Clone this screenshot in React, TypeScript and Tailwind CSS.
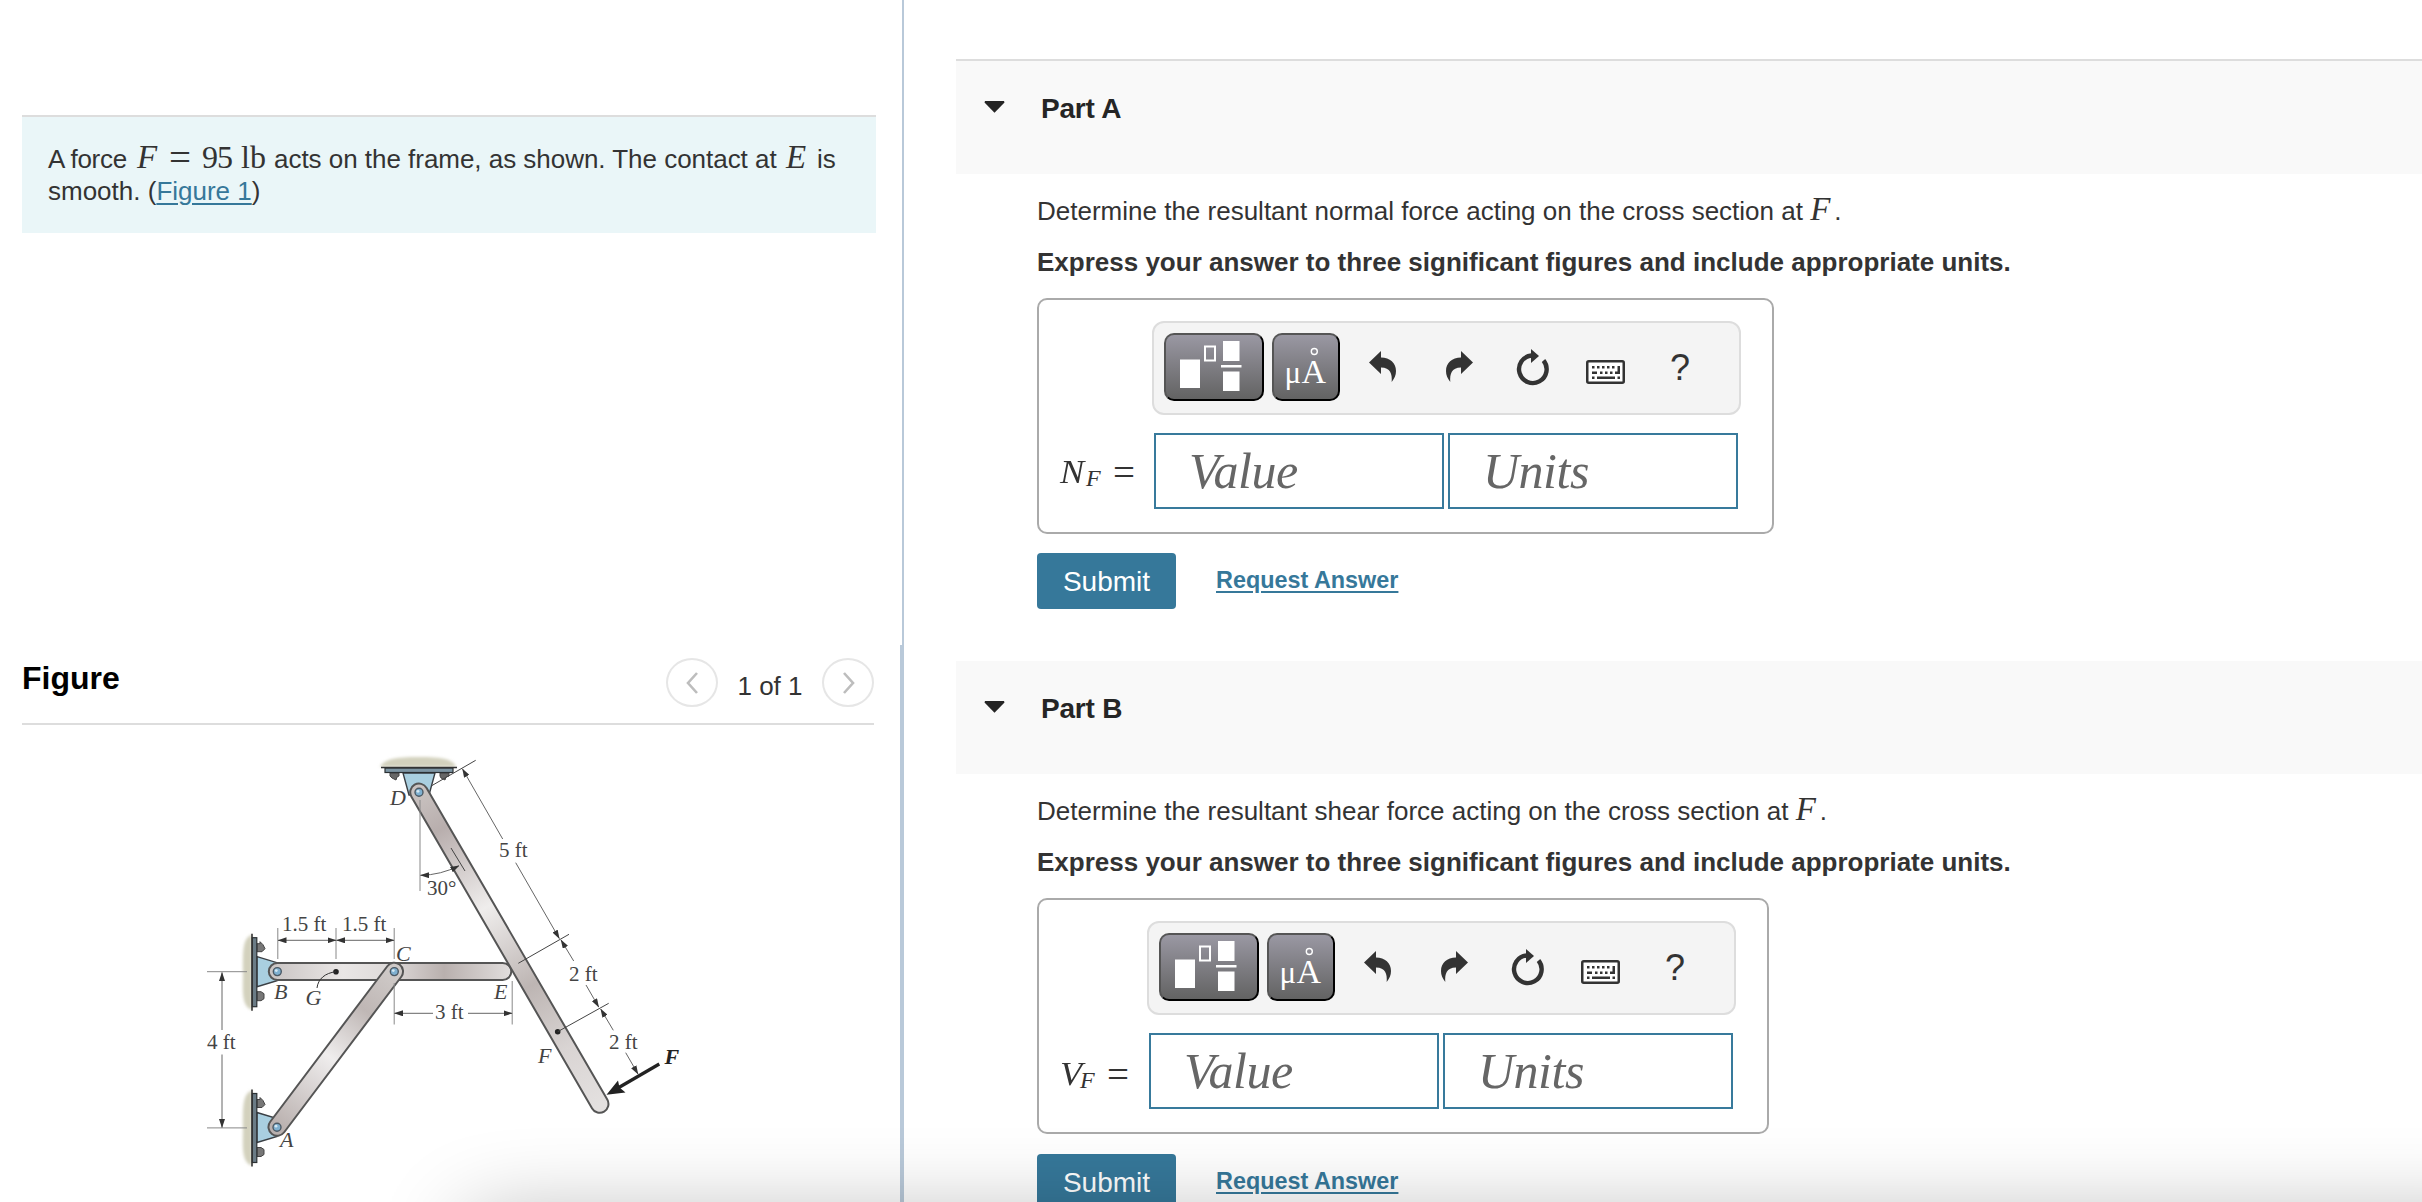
import type { ReactNode } from "react";

function Var({ children, className = "" }: { children: ReactNode; className?: string }) {
  return (
    <span className={`inline-block font-['Liberation_Serif',serif] leading-[0] whitespace-nowrap ${className}`}>
      {children}
    </span>
  );
}

function UndoIcon({ className = "" }: { className?: string }) {
  return (
    <svg className={className} width="27" height="31" viewBox="0 0 27 31" fill="#333">
      <path d="M0 11.500 12 0v6.500C21 6.500 27 12 27 20c0 4-1.500 7.500-4.300 11 .6-8-1.200-14.500-10.700-14.500V23z" />
    </svg>
  );
}

function ResetIcon() {
  return (
    <svg width="34" height="38" viewBox="0 0 34 38">
      <path d="M16.500 7.500A13.800 13.800 0 1 0 28.500 12.500" fill="none" stroke="#333" strokeWidth="4.400" />
      <path d="M16 1 24 8 16 15z" fill="#333" />
    </svg>
  );
}

function KeyboardIcon() {
  return (
    <svg width="39" height="24" viewBox="0 0 39 24" fill="#333">
      <rect x="1.250" y="1.250" width="36.500" height="21.500" rx="1.500" fill="#fff" stroke="#333" strokeWidth="2.500" />
      <path d="M6 6h2.500v2.500H6zM11 6h2.500v2.500H11zM16 6h2.500v2.500H16zM21 6h2.500v2.500H21zM26 6h2.500v2.500H26zM31.500 6H34v8h-5v-2.500h2.500z" />
      <path d="M6 11.500h5V14H6zM14 11.500h2.500V14H14zM19 11.500h2.500V14H19zM24 11.500h2.500V14H24zM6 16.500h2.500V19H6zM11 16.500h18V19H11zM31.500 16.500H34V19h-2.500z" />
    </svg>
  );
}

const toolButton =
  "h-[68px] rounded-[10px] border-2 border-t-[#555] border-l-[#555] border-r-black border-b-black bg-linear-to-b from-[#9a98a3] to-[#636363]";

function Toolbar() {
  return (
    <div className="flex h-[94px] w-[589px] items-start rounded-xl border-2 border-[#ddd] bg-[#f4f4f4] pt-[10px] pl-[10px]">
      <button className={`${toolButton} w-[100px]`}>
        <svg width="96" height="64" viewBox="2 2 96 64" fill="#fff">
          <path d="M16 26.500h20V55H16zM59 8h16.500v20H59zM57 32h20.500v2.500H57zM59 38.500h16.500v19.500H59z" />
          <rect x="41" y="13.500" width="10" height="14" fill="none" stroke="#fff" strokeWidth="2" />
        </svg>
      </button>
      <button className={`${toolButton} ml-2 w-[68px]`}>
        <svg width="64" height="64" viewBox="2 2 64 64" fill="#fff">
          <text x="12.500" y="49.500" fontSize="31" fontFamily="Liberation Serif">μ</text>
          <text x="29.500" y="49.500" fontSize="34" fontFamily="Liberation Serif">A</text>
          <circle cx="42.300" cy="18.500" r="3" fill="none" stroke="#fff" strokeWidth="1.400" />
        </svg>
      </button>
      <UndoIcon className="mt-[18px] ml-[29px]" />
      <UndoIcon className="mt-[18px] ml-[50px] -scale-x-100" />
      <span className="mt-[15px] ml-[42px]">
        <ResetIcon />
      </span>
      <span className="mt-[27px] ml-[37px]">
        <KeyboardIcon />
      </span>
      <span className="mt-[15px] ml-[45px] text-[36px] leading-10 text-[#333]">?</span>
    </div>
  );
}

function AnswerInput({ label }: { label: string }) {
  return (
    <div className="h-[76px] w-[290px] border-2 border-[#387a9c] bg-white pl-[33px] font-['Liberation_Serif',serif] text-[50px] leading-[73px] tracking-[-0.500px] text-[#666] italic">
      {label}
    </div>
  );
}

interface PartProps {
  title: string;
  force: string;
  symbol: string;
  symbolClass: string;
  labelClass: string;
  actionsClass: string;
}

function Part({ title, force, symbol, symbolClass, labelClass, actionsClass }: PartProps) {
  return (
    <section className="h-[600px]">
      <header className="flex h-[113px] bg-[#f9f9f9] pt-[31px] pl-7">
        <svg className="mt-[9px]" width="21" height="12" viewBox="0 0 21 12" fill="#252525">
          <path d="M1 0h19l.5 1.500L10.500 11.800.5 1.500z" />
        </svg>
        <h2 className="mt-px ml-9 text-[28px] leading-8 font-bold tracking-[-0.200px] text-[#252525]">{title}</h2>
      </header>
      <div className="pt-[21px] pl-[81px]">
        <p className="h-8 leading-8 whitespace-nowrap">
          Determine the resultant {force} force acting on the cross section at <Var className="w-[24px] text-[33px] italic">F</Var>.
        </p>
        <p className="mt-[19px] h-8 leading-8 font-bold whitespace-nowrap">
          Express your answer to three significant figures and include appropriate units.
        </p>
        <div className="mt-5 flex h-[236px] w-max rounded-[10px] border-2 border-[#aaa] pt-[21px] pr-[31px]">
          <div className={`pl-[21px] font-['Liberation_Serif',serif] whitespace-nowrap ${labelClass}`}>
            <div className="flex items-baseline leading-8">
              <span className={`text-[33px] italic ${symbolClass}`}>
                <span className="inline-block origin-left scale-x-110">{symbol}</span>
              </span>
              <span className="relative top-[3px] w-[27px] text-[24px] italic">F</span>
              <span className="relative top-[3px] text-[39px]">=</span>
            </div>
          </div>
          <div>
            <Toolbar />
            <div className="mt-[18px] ml-[2px] flex gap-1">
              <AnswerInput label="Value" />
              <AnswerInput label="Units" />
            </div>
          </div>
        </div>
        <div className={`flex ${actionsClass}`}>
          <button className="h-14 w-[139px] rounded bg-[#36789a] pt-px text-[28px] text-white">Submit</button>
          <a className="mt-[11px] ml-10 text-[23.400px] leading-8 font-bold text-[#36789a] underline decoration-2 underline-offset-[3px]">
            Request Answer
          </a>
        </div>
      </div>
    </section>
  );
}

function Pin({ x, y }: { x: number; y: number }) {
  return (
    <g>
      <circle cx={x} cy={y} r="4" fill="#7fb0d0" stroke="#4c5a65" strokeWidth="1.400" />
      <circle cx={x - 1} cy={y - 1} r="1.400" fill="#d5e8f2" />
    </g>
  );
}

// wall support, drawn around the pin on its right side
function WallSupport({ y }: { y: number }) {
  return (
    <g transform={`translate(0 ${y})`}>
      <path d="M252-37C242-34 243-18 243 0s-2 35 9 38z" fill="#d3d1bd" filter="url(#soft)" />
      <path d="M257-28h3v-2l3 3 2 4-3 3h-5zM257 20h4l3 2v5l-3 2h-4z" fill="#777" stroke="#444" strokeWidth="1" />
      <path d="M257-15 277-9v18l-20 6z" fill="#a9cfe0" stroke="#3a3f44" strokeWidth="1.400" />
      <rect x="252.300" y="-34" width="4.500" height="69" fill="#6b7c86" stroke="#2b3033" strokeWidth="1.200" />
      <path d="M252-38v77" stroke="#333" strokeWidth="1.600" />
    </g>
  );
}

function Arrows({ x1, y1, x2, y2, both = false }: { x1: number; y1: number; x2: number; y2: number; both?: boolean }) {
  return <line x1={x1} y1={y1} x2={x2} y2={y2} markerEnd="url(#arrow)" markerStart={both ? "url(#arrow)" : undefined} />;
}

function FrameFigure() {
  return (
    <svg className="ml-[168px]" width="510" height="462" viewBox="190 740 510 462">
      <defs>
        <filter id="soft" x="-30%" y="-30%" width="160%" height="160%">
          <feGaussianBlur stdDeviation="1.800" />
        </filter>
        <marker id="arrow" viewBox="0 0 9 6" refX="8.500" refY="3" markerWidth="9" markerHeight="6" markerUnits="userSpaceOnUse" orient="auto-start-reverse">
          <path d="M0 0 9 3 0 6z" fill="#333" />
        </marker>
        <linearGradient id="rodH" gradientUnits="userSpaceOnUse" x1="270" y1="0" x2="512" y2="0">
          <stop offset="0" stopColor="#c9c4c3" />
          <stop offset=".3" stopColor="#e9e6e5" />
          <stop offset=".5" stopColor="#dedad9" />
          <stop offset=".72" stopColor="#b9b0ae" />
          <stop offset="1" stopColor="#e2dfde" />
        </linearGradient>
        <linearGradient id="rodD" gradientUnits="userSpaceOnUse" x1="419" y1="792" x2="600" y2="1104">
          <stop offset="0" stopColor="#c9c2c0" />
          <stop offset=".12" stopColor="#b8aead" />
          <stop offset=".37" stopColor="#efedec" />
          <stop offset=".62" stopColor="#bdb5b3" />
          <stop offset=".82" stopColor="#d9d4d3" />
          <stop offset="1" stopColor="#e3e0df" />
        </linearGradient>
        <linearGradient id="rodA" gradientUnits="userSpaceOnUse" x1="277" y1="1127" x2="394" y2="971">
          <stop offset="0" stopColor="#b9b0ae" />
          <stop offset=".45" stopColor="#efeded" />
          <stop offset=".75" stopColor="#bfb7b5" />
          <stop offset="1" stopColor="#cfcac8" />
        </linearGradient>
      </defs>

      {/* supports */}
      <path d="M380 767c4-8 16-10 39-10s34 2 37 10z" fill="#d3d1bd" filter="url(#soft)" />
      <path d="M390 773h9v3l-2 1-1 3-4-2-2-2zM440 773h9v3l-3 1-1 3-4-2-1-2z" fill="#666" stroke="#444" strokeWidth="1" />
      <path d="M403 773h32l-6 22h-20z" fill="#a9cfe0" stroke="#3a3f44" strokeWidth="1.400" />
      <rect x="385" y="768" width="68" height="4.500" fill="#7d95a3" stroke="#2b3033" strokeWidth="1.200" />
      <path d="M381 767.500h76" stroke="#333" strokeWidth="1.600" />
      <WallSupport y={971.700} />
      <WallSupport y={1127.500} />

      {/* members */}
      <rect x="268.800" y="962.900" width="242.500" height="17.200" rx="8.600" fill="url(#rodH)" stroke="#555" strokeWidth="2" />
      <g strokeLinecap="round">
        <path d="M277.200 1127 394.300 971.500" stroke="#555" strokeWidth="19.500" />
        <path d="M277.200 1127 394.300 971.500" stroke="url(#rodA)" strokeWidth="15.500" />
        <path d="M419 792.300 599.700 1104" stroke="#555" strokeWidth="19.500" />
        <path d="M419 792.300 599.700 1104" stroke="url(#rodD)" strokeWidth="15.500" />
      </g>
      <Pin x={277.300} y={971.600} />
      <Pin x={394.300} y={971.600} />
      <Pin x={277} y={1127.200} />
      <Pin x={419} y={792.300} />
      <circle cx="336" cy="971.700" r="2.800" fill="#222" />
      <circle cx="557.700" cy="1031.700" r="2.800" fill="#222" />

      {/* extension lines */}
      <g stroke="#888" strokeWidth="1" fill="none">
        <path d="M277.800 928v31M336 928v31M394.200 928v31M394.200 983v41.500M512.200 981v43.500" />
        <path d="M207 971.700h40M207 1127.900h40M420 800v91" />
        <path d="M431.700 785.700 475.700 760.300M518.300 963.300 569 934.300M557.700 1031.700 608.700 1003.300M451 848 465 871" stroke="#444" />
        <path d="M336 971.700C325 973 318 979 317 988" stroke="#333" />
      </g>

      {/* dimension lines */}
      <g stroke="#666" strokeWidth="1" fill="none">
        <Arrows x1={278} y1={940.300} x2={336} y2={940.300} both />
        <Arrows x1={336.500} y1={940.300} x2={394} y2={940.300} both />
        <Arrows x1={433} y1={1013.300} x2={394.500} y2={1013.300} />
        <Arrows x1={468} y1={1013.300} x2={512} y2={1013.300} />
        <Arrows x1={222} y1={1030} x2={222} y2={972.500} />
        <Arrows x1={222} y1={1054.500} x2={222} y2={1127.500} />
        <Arrows x1={502.700} y1={839} x2={462.500} y2={769} />
        <Arrows x1={515.700} y1={862.700} x2={559.300} y2={938.500} />
        <Arrows x1={573.700} y1={961} x2={561} y2={940} />
        <Arrows x1={586} y1={985} x2={598.700} y2={1007} />
        <Arrows x1={613.300} y1={1030.300} x2={600.700} y2={1009} />
        <Arrows x1={625.700} y1={1052.700} x2={638} y2={1074} />
        <path d="M420.500 875.300Q441 875 459 865.700" markerStart="url(#arrow)" markerEnd="url(#arrow)" />
      </g>

      <path d="M659.300 1064 618 1088" stroke="#222" strokeWidth="3.200" />
      <path d="M606.500 1094.700 618 1080.500 619.500 1087.500 625.500 1092.500z" fill="#222" />

      <g fontFamily="Liberation Serif" fontSize="21" fill="#444">
        <text x="282" y="930.700">1.5 ft</text>
        <text x="342" y="930.700">1.5 ft</text>
        <text x="207" y="1048.700">4 ft</text>
        <text x="435" y="1018.700">3 ft</text>
        <text x="499" y="856.700">5 ft</text>
        <text x="569" y="981">2 ft</text>
        <text x="609" y="1049">2 ft</text>
        <text x="427" y="895">30°</text>
      </g>
      <g fontFamily="Liberation Serif" fontSize="22" fontStyle="italic" fill="#444">
        <text x="390" y="804.700">D</text>
        <text x="396" y="960.700">C</text>
        <text x="274" y="998.700">B</text>
        <text x="305.500" y="1005">G</text>
        <text x="280" y="1146.700">A</text>
        <text x="494" y="999">E</text>
        <text x="538" y="1062.700">F</text>
        <text x="664.500" y="1064.300" fontWeight="bold" fill="#222">F</text>
      </g>
    </svg>
  );
}

function PagerButton({ d }: { d: string }) {
  return (
    <button className="flex h-[49px] w-[52px] items-center justify-center rounded-[50%] border-2 border-[#e6e6e6]">
      <svg width="14" height="22" viewBox="0 0 14 22" fill="none" stroke="#bdbdbd" strokeWidth="2.600">
        <path d={d} />
      </svg>
    </button>
  );
}

export default function App() {
  return (
    <div className="relative flex h-[1202px] w-[2422px] overflow-hidden bg-white font-['Liberation_Sans',Arial,sans-serif] text-[26px] text-[#333]">
      <div className="flex w-[900px] flex-col pt-[115px] pl-[22px]">
        <div className="h-[118px] w-[854px] border-t-2 border-[#ddd] bg-[#eaf6f8] pt-[26px] pl-[26px] leading-8 whitespace-nowrap">
          <p className="flex h-8 items-baseline">
            <span className="w-[89px] tracking-[-0.300px]">A force</span>
            <Var className="w-8 text-[33px] italic">F</Var>
            <Var className="relative top-[3px] w-[33px] text-[39px]">=</Var>
            <Var className="w-[39px] text-[32px] tracking-[-1px]">95</Var>
            <Var className="w-[33px] text-[32px]">lb</Var>
            <span className="w-[512px] tracking-[-0.030px]">acts on the frame, as shown. The contact at</span>
            <Var className="w-[31px] text-[33px] italic">E</Var>
            <span>is</span>
          </p>
          <p className="h-8">
            smooth. (<a className="text-[#36789a] underline decoration-2 underline-offset-[3px]">Figure 1</a>)
          </p>
        </div>
        <div className="mt-[425px] flex h-[67px] w-[852px] items-start border-b-2 border-[#ddd]">
          <h2 className="mt-[2px] text-[32px] leading-9 font-bold text-black">Figure</h2>
          <div className="ml-auto flex">
            <PagerButton d="M12 1 3 11l9 10" />
            <span className="mt-3 w-[104px] text-center leading-8">1 of 1</span>
            <PagerButton d="M3 1l9 10-9 10" />
          </div>
        </div>
        <div className="mt-[15px]">
          <FrameFigure />
        </div>
      </div>

      <div className="flex w-1 flex-col items-end">
        <div className="h-[645px] w-[2px] bg-[#b9c9d9]" />
        <div className="w-1 grow bg-[#b9c9d9]" />
      </div>

      <main className="ml-[52px] grow pt-[59px]">
        <div className="h-[2px] bg-[#ddd]" />
        <Part title="Part A" force="normal" symbol="N" symbolClass="w-[26px]" labelClass="w-[113px] pt-[133px]" actionsClass="mt-[19px]" />
        <Part title="Part B" force="shear" symbol="V" symbolClass="w-5" labelClass="w-[108px] pt-[135px]" actionsClass="mt-5" />
      </main>

      {/* shadow rising from the bottom edge */}
      <div className="pointer-events-none absolute top-[1222px] right-[-100px] left-[470px] h-20 shadow-[0_0_90px_0_rgba(0,0,0,0.33)]" />
    </div>
  );
}
